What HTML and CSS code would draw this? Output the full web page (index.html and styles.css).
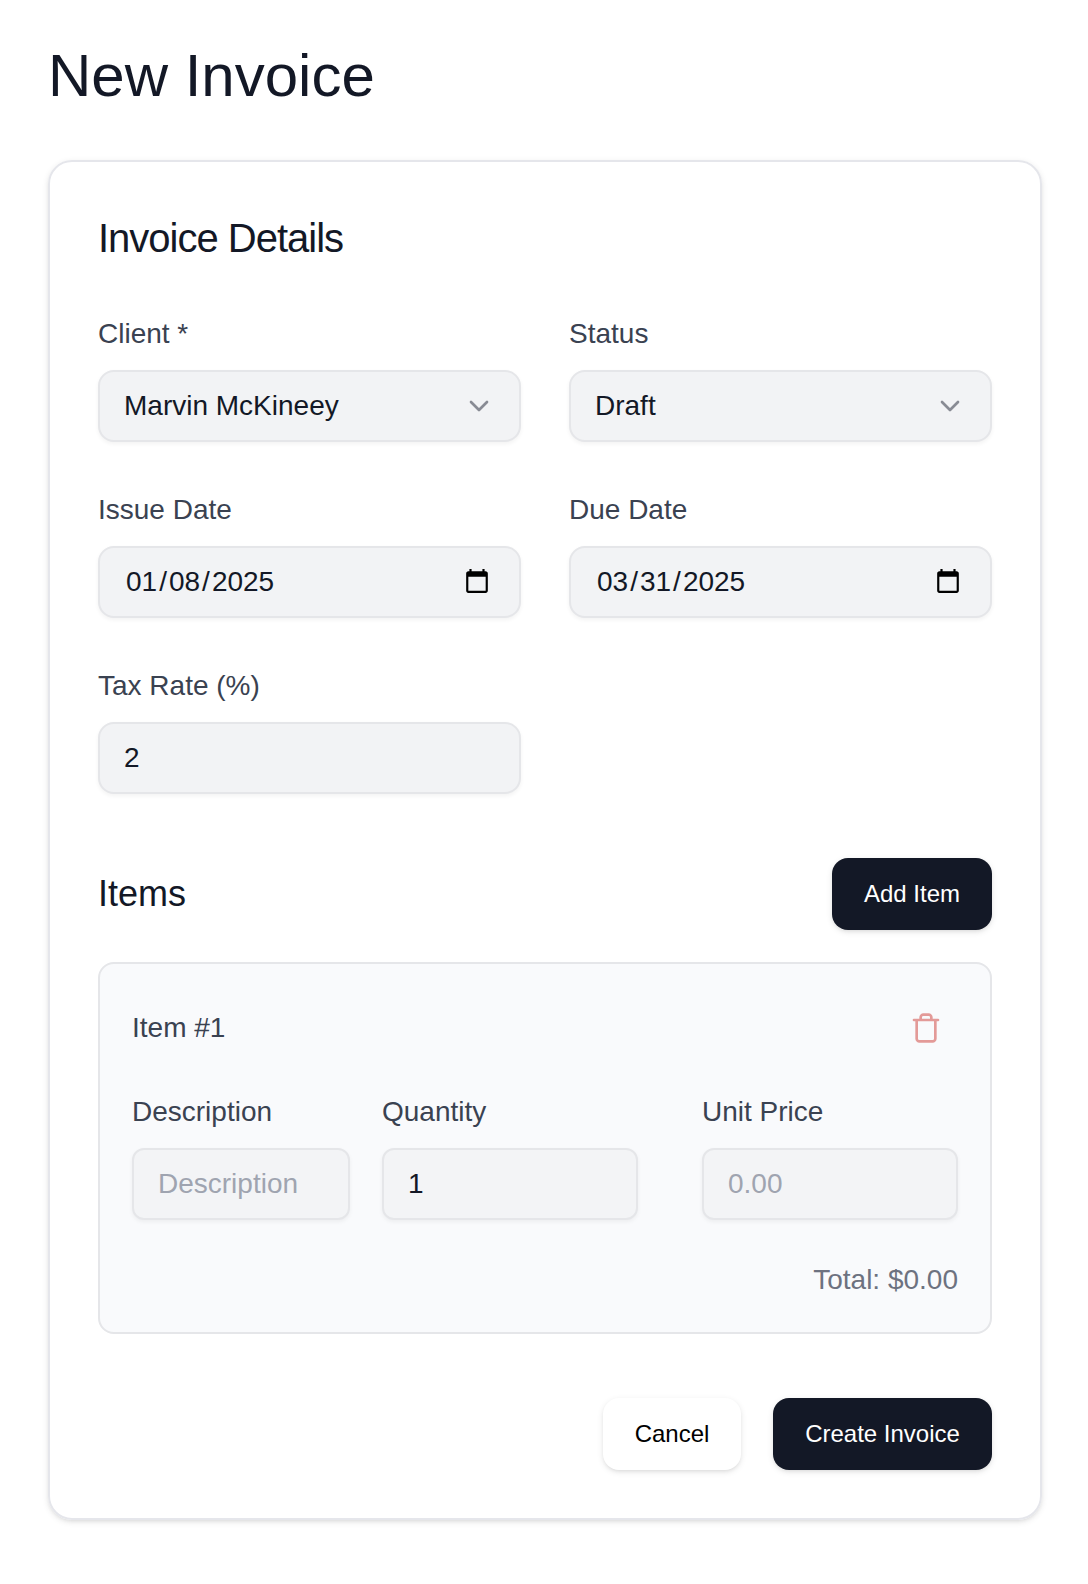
FILE: index.html
```html
<!DOCTYPE html>
<html lang="en">
<head>
<meta charset="utf-8">
<title>New Invoice</title>
<link rel="stylesheet" href="styles.css">
</head>
<body>
<svg class="sprite" aria-hidden="true">
  <symbol id="chevron" viewBox="0 0 24 24"><path d="m6 9 6 6 6-6" fill="none" stroke="currentColor" stroke-width="2" stroke-linecap="round" stroke-linejoin="round"/></symbol>
  <symbol id="calendar" viewBox="0 0 24 24"><path fill="currentColor" d="M20 3h-1V1h-2v2H7V1H5v2H4c-1.1 0-2 .9-2 2v16c0 1.1.9 2 2 2h16c1.1 0 2-.9 2-2V5c0-1.1-.9-2-2-2zm0 18H4V8h16v13z"/></symbol>
</svg>
<main class="page">
  <h1 class="page-title">New Invoice</h1>
  <form class="card">
    <h2 class="card-title">Invoice Details</h2>
    <div class="fields">
      <div class="field">
        <label class="label">Client *</label>
        <div class="control"><span>Marvin McKineey</span><svg class="chevron"><use href="#chevron"/></svg></div>
      </div>
      <div class="field">
        <label class="label">Status</label>
        <div class="control"><span>Draft</span><svg class="chevron"><use href="#chevron"/></svg></div>
      </div>
      <div class="field">
        <label class="label">Issue Date</label>
        <div class="control date"><span class="date-text"><span class="part">01</span>/<span class="part">08</span>/<span class="part">2025</span></span><svg class="calendar"><use href="#calendar"/></svg></div>
      </div>
      <div class="field">
        <label class="label">Due Date</label>
        <div class="control date"><span class="date-text"><span class="part">03</span>/<span class="part">31</span>/<span class="part">2025</span></span><svg class="calendar"><use href="#calendar"/></svg></div>
      </div>
      <div class="field">
        <label class="label" for="tax">Tax Rate (%)</label>
        <input class="control" id="tax" value="2">
      </div>
    </div>
    <div class="items-head">
      <h3 class="items-title">Items</h3>
      <button class="button primary add" type="button">Add Item</button>
    </div>
    <section class="item">
      <div class="item-head">
        <span class="item-name">Item #1</span>
        <button class="remove" type="button" aria-label="Remove item">
          <svg class="trash" viewBox="0 0 24 24"><path d="M3 6h18M19 6v14c0 1-1 2-2 2H7c-1 0-2-1-2-2V6M8 6V4c0-1 1-2 2-2h4c1 0 2 1 2 2v2"/></svg>
        </button>
      </div>
      <div class="item-fields">
        <div class="field">
          <label class="label" for="description">Description</label>
          <input class="control small" id="description" placeholder="Description">
        </div>
        <div class="field quantity">
          <label class="label" for="quantity">Quantity</label>
          <input class="control small" id="quantity" value="1">
        </div>
        <div class="field">
          <label class="label" for="price">Unit Price</label>
          <input class="control small" id="price" placeholder="0.00">
        </div>
      </div>
      <p class="total">Total: $0.00</p>
    </section>
    <div class="actions">
      <button class="button cancel" type="button">Cancel</button>
      <button class="button primary create" type="button">Create Invoice</button>
    </div>
  </form>
</main>
</body>
</html>
```
FILE: styles.css
```css
* { box-sizing: border-box; }
body {
  margin: 0;
  background: #fff;
  color: #131826;
  font: 28px/40px "Liberation Sans", Arial, sans-serif;
}
h1, h2, h3, p { margin: 0; font-weight: 400; }
.sprite { display: none; }
.page { padding: 40px 46px 64px 48px; }
.page-title { font-size: 60px; line-height: 72px; margin-bottom: 48px; }
.card {
  height: 1360px;
  padding: 48px;
  border: 2px solid #e5e6eb;
  border-radius: 24px;
  box-shadow: 0 2px 6px rgba(0, 0, 0, .1), 0 2px 4px -2px rgba(0, 0, 0, .1);
}
.card-title { font-size: 40px; line-height: 56px; letter-spacing: -1px; margin-bottom: 48px; }
.fields { display: grid; grid-template-columns: 1fr 1fr; gap: 48px; }
.field { display: flex; flex-direction: column; gap: 16px; min-width: 0; }
.label { color: #3a4251; }
.control {
  display: flex;
  align-items: center;
  justify-content: space-between;
  width: 100%;
  height: 72px;
  padding: 0 24px;
  border: 2px solid #e5e6e9;
  border-radius: 16px;
  background: #f2f3f5;
  box-shadow: 0 2px 4px rgba(0, 0, 0, .05);
  color: #131826;
  font: inherit;
}
.control.small { border-radius: 12px; background: #f3f4f6; }
.control::placeholder { color: #9fa4b0; opacity: 1; }
.chevron { width: 32px; height: 32px; color: #888b94; }
.date-text { display: flex; }
.part { padding: 0 2px; }
.calendar { width: 26px; height: 26px; margin: 0 5px 2px 0; color: #000; }
.items-head { display: flex; align-items: center; justify-content: space-between; margin-top: 64px; }
.items-title { font-size: 36px; line-height: 56px; }
.button {
  height: 72px;
  padding: 0;
  border: 0;
  border-radius: 16px;
  font: 24px/32px "Liberation Sans", Arial, sans-serif;
  box-shadow: 0 2px 6px rgba(0, 0, 0, .1), 0 2px 4px -2px rgba(0, 0, 0, .1);
}
.primary { background: #131826; color: #fff; }
.cancel { width: 138px; background: #fff; color: #000; }
.add { width: 160px; }
.create { width: 219px; }
.item {
  margin-top: 32px;
  padding: 32px;
  border: 2px solid #e5e6e9;
  border-radius: 16px;
  background: #f9fafc;
}
.item-head { display: flex; align-items: center; justify-content: space-between; height: 64px; color: #3a4251; }
.remove { display: grid; place-items: center; width: 64px; height: 64px; padding: 0; border: 0; background: none; }
.trash { width: 32px; height: 32px; fill: none; stroke: #e39a98; stroke-width: 2; stroke-linecap: round; stroke-linejoin: round; }
.item-fields { display: grid; grid-template-columns: 218px 288px 256px; gap: 32px; margin-top: 32px; }
.quantity { padding-right: 32px; }
.total { margin-top: 40px; text-align: right; color: #6d7280; }
.actions { display: flex; justify-content: flex-end; gap: 32px; margin-top: 64px; }
```
